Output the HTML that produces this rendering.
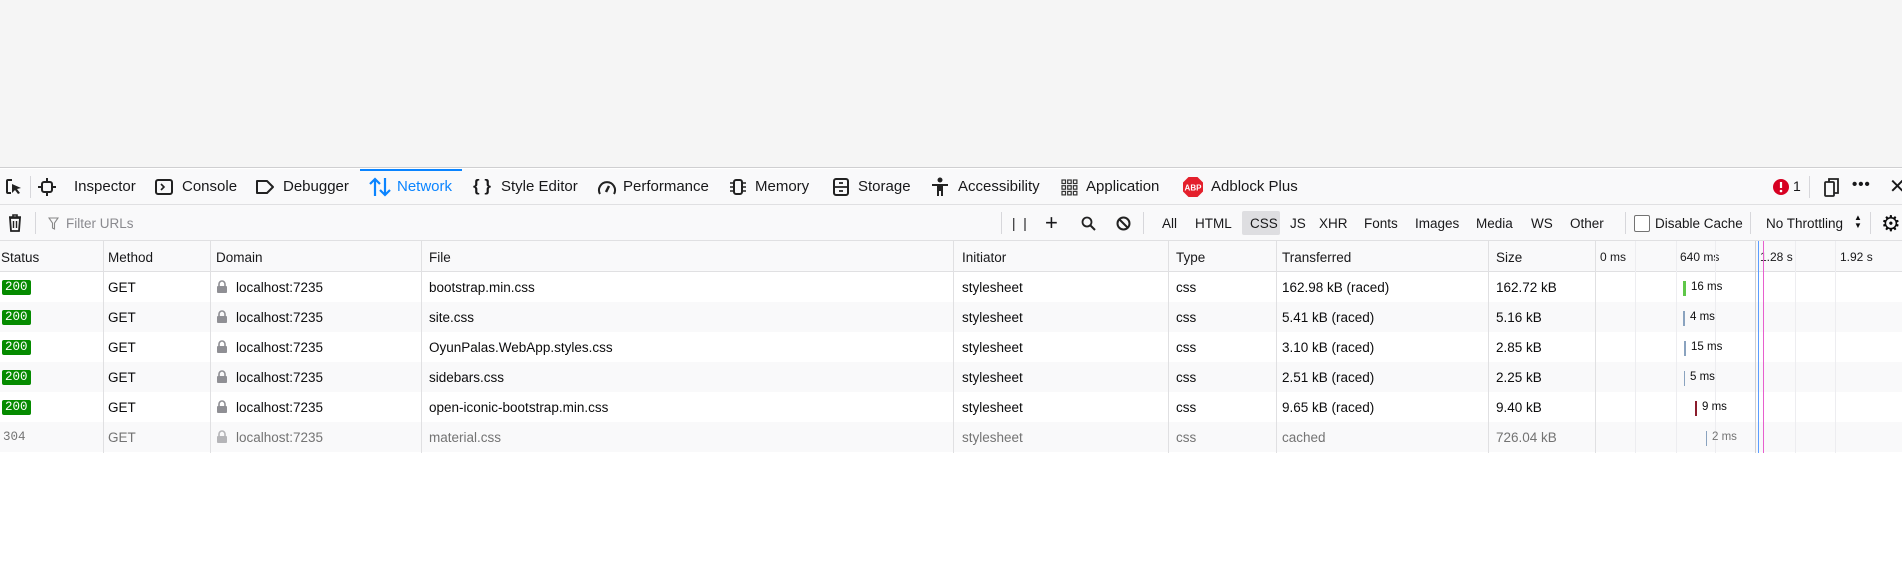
<!DOCTYPE html>
<html><head><meta charset="utf-8"><style>
*{margin:0;padding:0;box-sizing:border-box}
body{width:1902px;height:582px;background:#fff;font-family:"Liberation Sans",sans-serif;color:#0c0c0d;position:relative;overflow:hidden}
.a{position:absolute;white-space:nowrap}
.top{left:0;top:0;width:1902px;height:168px;background:#f5f5f5;border-bottom:1px solid #cfcfd1}
.tabs{left:0;top:169px;width:1902px;height:36px;background:#f9f9fa;border-bottom:1px solid #e0e0e2}
.filt{left:0;top:205px;width:1902px;height:36px;background:#f9f9fa;border-bottom:1px solid #e0e0e2}
.hdr{left:0;top:241px;width:1902px;height:31px;background:#f9f9fa;border-bottom:1px solid #e0e0e2}
.t{font-size:15px;top:178px;color:#18181a}
.f{font-size:13.5px;top:216px;color:#18181a}
.h{font-size:13.5px;top:250px;color:#18181a}
.vl{position:absolute;width:1px;background:#e0e0e2;top:241px;height:212px}
.row{position:absolute;left:0;width:1902px;height:30px}
.row span{position:absolute;top:8px;font-size:13.5px;white-space:nowrap}
.badge{background:#058b00;color:#fff;font-family:"Liberation Mono",monospace;font-size:12.5px!important;padding:0 3px;border-radius:2px;top:8px!important;left:2px;line-height:15px}
.sep{position:absolute;width:1px;background:#d7d7db;height:22px}
.ic{position:absolute}
</style></head><body>
<div class="a top"></div>
<div class="a tabs"></div>
<div class="a filt"></div>
<div class="a hdr"></div>
<svg class="ic" style="left:5px;top:178px" width="18" height="18" viewBox="0 0 18 18"><path d="M7 2H3a1 1 0 0 0-1 1v11a1 1 0 0 0 1 1h3" fill="none" stroke="#222" stroke-width="2"/><path d="M7 6l9 4-4 1 3 4-2 1-3-4-3 3z" fill="#222"/></svg>
<div class="sep" style="left:30px;top:176px"></div>
<svg class="ic" style="left:38px;top:178px" width="18" height="18" viewBox="0 0 18 18"><rect x="4" y="4" width="10" height="10" rx="2" fill="none" stroke="#222" stroke-width="2"/><path d="M9 0v4M9 14v4M0 9h4M14 9h4" stroke="#222" stroke-width="2"/></svg>
<div class="a t" style="left:74px">Inspector</div>
<svg class="ic" style="left:155px;top:179px" width="18" height="16" viewBox="0 0 18 16"><rect x="1" y="1" width="16" height="14" rx="2" fill="none" stroke="#222" stroke-width="2"/><path d="M6 5l3 3-3 3" fill="none" stroke="#222" stroke-width="1.6"/></svg>
<div class="a t" style="left:182px">Console</div>
<svg class="ic" style="left:255px;top:179px" width="20" height="16" viewBox="0 0 20 16"><path d="M2 2h10l6 6-6 6H2z" fill="none" stroke="#222" stroke-width="2" stroke-linejoin="round"/></svg>
<div class="a t" style="left:283px">Debugger</div>
<div class="a" style="left:360px;top:169px;width:102px;height:2px;background:#0a84ff"></div>
<svg class="ic" style="left:369px;top:177px" width="22" height="20" viewBox="0 0 22 20"><path d="M6 19V2M1 7l5-5 5 5M16 1v17M11 13l5 5 5-5" fill="none" stroke="#0a84ff" stroke-width="2.2"/></svg>
<div class="a t" style="left:397px;color:#0a84ff">Network</div>
<div class="a t" style="left:473px;font-weight:bold;font-size:17px;top:176px">{ }</div>
<div class="a t" style="left:501px">Style Editor</div>
<svg class="ic" style="left:597px;top:178px" width="20" height="18" viewBox="0 0 20 18"><path d="M3 16A8 8 0 1 1 17 16" fill="none" stroke="#222" stroke-width="2"/><path d="M9 14l3-6" stroke="#222" stroke-width="2.5"/></svg>
<div class="a t" style="left:623px">Performance</div>
<svg class="ic" style="left:728px;top:178px" width="20" height="18" viewBox="0 0 20 18"><rect x="6" y="2" width="8" height="14" rx="2" fill="none" stroke="#222" stroke-width="2"/><path d="M2 5h3M2 9h3M2 13h3M15 5h3M15 9h3M15 13h3" stroke="#222" stroke-width="1.4"/></svg>
<div class="a t" style="left:755px">Memory</div>
<svg class="ic" style="left:832px;top:178px" width="18" height="18" viewBox="0 0 18 18"><rect x="2" y="1" width="14" height="16" rx="2" fill="none" stroke="#222" stroke-width="2"/><path d="M2 9h14M7 5h4M7 13h4" stroke="#222" stroke-width="1.8"/></svg>
<div class="a t" style="left:858px">Storage</div>
<svg class="ic" style="left:931px;top:177px" width="18" height="20" viewBox="0 0 18 20"><circle cx="9" cy="3" r="2.5" fill="#222"/><path d="M1 7h16v2h-5v10h-2v-5H8v5H6V9H1z" fill="#222"/></svg>
<div class="a t" style="left:958px">Accessibility</div>
<svg class="ic" style="left:1061px;top:179px" width="17" height="17" viewBox="0 0 17 17" fill="none" stroke="#333" stroke-width="1.2"><rect x="1" y="1" width="3.5" height="3.5"/><rect x="6.7" y="1" width="3.5" height="3.5"/><rect x="12.4" y="1" width="3.5" height="3.5"/><rect x="1" y="6.7" width="3.5" height="3.5"/><rect x="6.7" y="6.7" width="3.5" height="3.5"/><rect x="12.4" y="6.7" width="3.5" height="3.5"/><rect x="1" y="12.4" width="3.5" height="3.5"/><rect x="6.7" y="12.4" width="3.5" height="3.5"/><rect x="12.4" y="12.4" width="3.5" height="3.5"/></svg>
<div class="a t" style="left:1086px">Application</div>
<svg class="ic" style="left:1182px;top:176px" width="22" height="22" viewBox="0 0 22 22"><path d="M6.5 1h9L21 6.5v9L15.5 21h-9L1 15.5v-9z" fill="#e4202c"/><text x="11" y="14.5" font-size="8" font-weight="bold" fill="#fff" text-anchor="middle" font-family="Liberation Sans">ABP</text></svg>
<div class="a t" style="left:1211px">Adblock Plus</div>
<svg class="ic" style="left:1773px;top:179px" width="16" height="16" viewBox="0 0 16 16"><circle cx="8" cy="8" r="8" fill="#d70022"/><path d="M8 3v6" stroke="#fff" stroke-width="2.2"/><circle cx="8" cy="12" r="1.3" fill="#fff"/></svg>
<div class="a t" style="left:1793px;font-size:14px">1</div>
<div class="sep" style="left:1809px;top:176px"></div>
<svg class="ic" style="left:1822px;top:177px" width="18" height="20" viewBox="0 0 18 20"><rect x="3" y="5" width="9" height="14" rx="1" fill="none" stroke="#222" stroke-width="1.8"/><path d="M7 5V2h9v14h-4" fill="none" stroke="#222" stroke-width="1.8"/></svg>
<div class="a t" style="left:1852px;font-weight:bold;letter-spacing:1px;top:176px">•••</div>
<div class="a t" style="left:1889px;font-size:20px;top:174px">✕</div>
<svg class="ic" style="left:8px;top:214px" width="14" height="18" viewBox="0 0 14 18"><path d="M1 3h12M5 3V1h4v2" fill="none" stroke="#222" stroke-width="1.6"/><path d="M2 4h10l-1 13H3z" fill="none" stroke="#222" stroke-width="1.8"/><path d="M5.5 7v7M8.5 7v7" stroke="#222" stroke-width="1.4"/></svg>
<div class="sep" style="left:35px;top:212px"></div>
<svg class="ic" style="left:48px;top:217px" width="11" height="13" viewBox="0 0 11 13"><path d="M1 1h9L6.5 6v6L4.5 11V6z" fill="none" stroke="#888" stroke-width="1.1"/></svg>
<div class="a f" style="left:66px;color:#8a8a8f">Filter URLs</div>
<div class="sep" style="left:1001px;top:212px"></div>
<div class="a f" style="left:1012px;letter-spacing:2px">| |</div>
<div class="a f" style="left:1045px;font-size:22px;top:210px">+</div>
<svg class="ic" style="left:1081px;top:216px" width="15" height="15" viewBox="0 0 15 15"><circle cx="6" cy="6" r="4.5" fill="none" stroke="#222" stroke-width="1.8"/><path d="M9.5 9.5l4.5 4.5" stroke="#222" stroke-width="2"/></svg>
<svg class="ic" style="left:1116px;top:216px" width="15" height="15" viewBox="0 0 15 15"><circle cx="7.5" cy="7.5" r="6" fill="none" stroke="#222" stroke-width="2"/><path d="M3.5 3.5l8 8" stroke="#222" stroke-width="2"/></svg>
<div class="sep" style="left:1143px;top:212px"></div>
<div class="a f" style="left:1162px">All</div>
<div class="a f" style="left:1195px">HTML</div>
<div class="a" style="left:1242px;top:211px;width:38px;height:24px;background:#dedee1;border-radius:2px"></div>
<div class="a f" style="left:1250px">CSS</div>
<div class="a f" style="left:1290px">JS</div>
<div class="a f" style="left:1319px">XHR</div>
<div class="a f" style="left:1364px">Fonts</div>
<div class="a f" style="left:1415px">Images</div>
<div class="a f" style="left:1476px">Media</div>
<div class="a f" style="left:1531px">WS</div>
<div class="a f" style="left:1570px">Other</div>
<div class="sep" style="left:1625px;top:212px"></div>
<div class="a" style="left:1634px;top:215px;width:16px;height:17px;border:1.5px solid #737373;border-radius:2px;background:#fff"></div>
<div class="a f" style="left:1655px">Disable Cache</div>
<div class="sep" style="left:1750px;top:212px"></div>
<div class="a f" style="left:1766px">No Throttling</div>
<div class="a" style="left:1854px;top:214px;font-size:8px;line-height:8px">▲<br>▼</div>
<div class="sep" style="left:1870px;top:212px"></div>
<div class="a" style="left:1881px;top:211px;font-size:22px">⚙</div>
<div class="a h" style="left:1px">Status</div>
<div class="a h" style="left:108px">Method</div>
<div class="a h" style="left:216px">Domain</div>
<div class="a h" style="left:429px">File</div>
<div class="a h" style="left:962px">Initiator</div>
<div class="a h" style="left:1176px">Type</div>
<div class="a h" style="left:1282px">Transferred</div>
<div class="a h" style="left:1496px">Size</div>
<div class="a h" style="left:1600px;font-size:12px">0 ms</div>
<div class="a h" style="left:1680px;font-size:12px">640 ms</div>
<div class="a h" style="left:1760px;font-size:12px">1.28 s</div>
<div class="a h" style="left:1840px;font-size:12px">1.92 s</div>
<div class="row" style="top:272px"><span class="badge">200</span><span style="left:108px">GET</span><span style="left:236px">localhost:7235</span><span style="left:429px">bootstrap.min.css</span><span style="left:962px">stylesheet</span><span style="left:1176px">css</span><span style="left:1282px">162.98 kB (raced)</span><span style="left:1496px">162.72 kB</span></div>
<div class="row" style="top:302px;background:#f9f9fa"><span class="badge">200</span><span style="left:108px">GET</span><span style="left:236px">localhost:7235</span><span style="left:429px">site.css</span><span style="left:962px">stylesheet</span><span style="left:1176px">css</span><span style="left:1282px">5.41 kB (raced)</span><span style="left:1496px">5.16 kB</span></div>
<div class="row" style="top:332px"><span class="badge">200</span><span style="left:108px">GET</span><span style="left:236px">localhost:7235</span><span style="left:429px">OyunPalas.WebApp.styles.css</span><span style="left:962px">stylesheet</span><span style="left:1176px">css</span><span style="left:1282px">3.10 kB (raced)</span><span style="left:1496px">2.85 kB</span></div>
<div class="row" style="top:362px;background:#f9f9fa"><span class="badge">200</span><span style="left:108px">GET</span><span style="left:236px">localhost:7235</span><span style="left:429px">sidebars.css</span><span style="left:962px">stylesheet</span><span style="left:1176px">css</span><span style="left:1282px">2.51 kB (raced)</span><span style="left:1496px">2.25 kB</span></div>
<div class="row" style="top:392px"><span class="badge">200</span><span style="left:108px">GET</span><span style="left:236px">localhost:7235</span><span style="left:429px">open-iconic-bootstrap.min.css</span><span style="left:962px">stylesheet</span><span style="left:1176px">css</span><span style="left:1282px">9.65 kB (raced)</span><span style="left:1496px">9.40 kB</span></div>
<div class="row" style="top:422px;background:#f9f9fa;color:#737373"><span style="left:3px;font-family:'Liberation Mono',monospace;font-size:12.5px;top:8px">304</span><span style="left:108px">GET</span><span style="left:236px">localhost:7235</span><span style="left:429px">material.css</span><span style="left:962px">stylesheet</span><span style="left:1176px">css</span><span style="left:1282px">cached</span><span style="left:1496px">726.04 kB</span></div>
<svg class="ic" style="left:216px;top:280px" width="12" height="13" viewBox="0 0 12 13"><path d="M3 6V4a3 3 0 0 1 6 0v2" fill="none" stroke="#8f8f94" stroke-width="1.6"/><rect x="1" y="6" width="10" height="7" rx="1" fill="#8f8f94"/></svg>
<svg class="ic" style="left:216px;top:310px" width="12" height="13" viewBox="0 0 12 13"><path d="M3 6V4a3 3 0 0 1 6 0v2" fill="none" stroke="#8f8f94" stroke-width="1.6"/><rect x="1" y="6" width="10" height="7" rx="1" fill="#8f8f94"/></svg>
<svg class="ic" style="left:216px;top:340px" width="12" height="13" viewBox="0 0 12 13"><path d="M3 6V4a3 3 0 0 1 6 0v2" fill="none" stroke="#8f8f94" stroke-width="1.6"/><rect x="1" y="6" width="10" height="7" rx="1" fill="#8f8f94"/></svg>
<svg class="ic" style="left:216px;top:370px" width="12" height="13" viewBox="0 0 12 13"><path d="M3 6V4a3 3 0 0 1 6 0v2" fill="none" stroke="#8f8f94" stroke-width="1.6"/><rect x="1" y="6" width="10" height="7" rx="1" fill="#8f8f94"/></svg>
<svg class="ic" style="left:216px;top:400px" width="12" height="13" viewBox="0 0 12 13"><path d="M3 6V4a3 3 0 0 1 6 0v2" fill="none" stroke="#8f8f94" stroke-width="1.6"/><rect x="1" y="6" width="10" height="7" rx="1" fill="#8f8f94"/></svg>
<svg class="ic" style="left:216px;top:430px" width="12" height="13" viewBox="0 0 12 13"><path d="M3 6V4a3 3 0 0 1 6 0v2" fill="none" stroke="#b5b5b8" stroke-width="1.6"/><rect x="1" y="6" width="10" height="7" rx="1" fill="#b5b5b8"/></svg>
<div class="vl" style="left:103px"></div><div class="vl" style="left:210px"></div><div class="vl" style="left:421px"></div><div class="vl" style="left:953px"></div><div class="vl" style="left:1168px"></div><div class="vl" style="left:1276px"></div><div class="vl" style="left:1488px"></div><div class="vl" style="left:1595px"></div>
<div class="vl" style="left:1635px;background:#ededf0"></div><div class="vl" style="left:1676px;background:#ededf0"></div><div class="vl" style="left:1715px;background:#ededf0"></div><div class="vl" style="left:1755px;background:#d0d0d4"></div><div class="vl" style="left:1795px;background:#ededf0"></div><div class="vl" style="left:1835px;background:#ededf0"></div>
<div class="vl" style="left:1758px;background:#5b9dff"></div><div class="vl" style="left:1763px;background:#e75fce"></div>
<div class="a" style="left:1683px;top:281px;width:3px;height:15px;background:#5fc749"></div><div class="a" style="left:1691px;top:281px;font-size:11.5px">16 ms</div>
<div class="a" style="left:1683px;top:311px;width:2px;height:15px;background:#8aa3bf"></div><div class="a" style="left:1690px;top:311px;font-size:11.5px">4 ms</div>
<div class="a" style="left:1684px;top:341px;width:2px;height:15px;background:#8aa3bf"></div><div class="a" style="left:1691px;top:341px;font-size:11.5px">15 ms</div>
<div class="a" style="left:1684px;top:371px;width:1px;height:15px;background:#8aa3bf"></div><div class="a" style="left:1690px;top:371px;font-size:11.5px">5 ms</div>
<div class="a" style="left:1695px;top:401px;width:2px;height:15px;background:#8b1c2c"></div><div class="a" style="left:1702px;top:401px;font-size:11.5px">9 ms</div>
<div class="a" style="left:1706px;top:431px;width:1px;height:15px;background:#8aa3bf"></div><div class="a" style="left:1712px;top:431px;font-size:11.5px;color:#737373">2 ms</div>
</body></html>
